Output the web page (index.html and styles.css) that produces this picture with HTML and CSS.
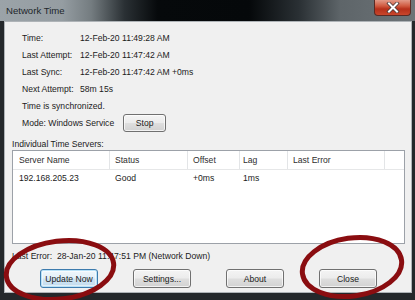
FILE: index.html
```html
<!DOCTYPE html>
<html>
<head>
<meta charset="utf-8">
<link rel="stylesheet" href="styles.css">
</head>
<body>
<div class="window">
  <div class="titlebar">
    <span class="title">Network Time</span>
    <div class="closebtn">
      <svg width="14" height="11" viewBox="0 0 14 11"><path d="M3 1.5 L11 9.5 M11 1.5 L3 9.5" stroke="#4a3a3a" stroke-width="3.6" stroke-linecap="square"/><path d="M3 1.5 L11 9.5 M11 1.5 L3 9.5" stroke="#ffffff" stroke-width="2" stroke-linecap="square"/></svg>
    </div>
  </div>
  <div class="panel">
    <div class="info">
      <div class="row"><span class="lbl">Time:</span><span>12-Feb-20 11:49:28 AM</span></div>
      <div class="row"><span class="lbl">Last Attempt:</span><span>12-Feb-20 11:47:42 AM</span></div>
      <div class="row"><span class="lbl">Last Sync:</span><span>12-Feb-20 11:47:42 AM +0ms</span></div>
      <div class="row"><span class="lbl">Next Attempt:</span><span>58m 15s</span></div>
      <div class="row">Time is synchronized.</div>
      <div class="moderow"><span>Mode: Windows Service</span><button class="btn stop">Stop</button></div>
    </div>
    <div class="section">Individual Time Servers:</div>
    <div class="listview">
      <div class="lvhead">
        <div class="c c1">Server Name</div>
        <div class="c c2">Status</div>
        <div class="c c3">Offset</div>
        <div class="c c4">Lag</div>
        <div class="c c5">Last Error</div>
        <div class="c c6"></div>
      </div>
      <div class="lvrow">
        <div class="c c1">192.168.205.23</div>
        <div class="c c2">Good</div>
        <div class="c c3">+0ms</div>
        <div class="c c4">1ms</div>
        <div class="c c5"></div>
      </div>
    </div>
    <div class="lasterr">Last Error:&nbsp; 28-Jan-20 11:47:51 PM (Network Down)</div>
    <div class="buttons">
      <button class="btn focus">Update Now</button>
      <button class="btn">Settings...</button>
      <button class="btn">About</button>
      <button class="btn">Close</button>
    </div>
  </div>
  <svg class="marks" width="415" height="300" viewBox="0 0 415 300">
    <ellipse cx="60" cy="270" rx="54" ry="29" transform="rotate(-7 60 270)" fill="none" stroke="#8a0d10" stroke-width="5"/>
    <ellipse cx="352" cy="267" rx="50" ry="29" transform="rotate(-8 352 267)" fill="none" stroke="#8a0d10" stroke-width="5"/>
  </svg>
</div>
</body>
</html>
```
FILE: styles.css
```css
html, body {
  margin: 0;
  padding: 0;
  background: #23272a;
}
.window {
  position: relative;
  width: 415px;
  height: 300px;
  overflow: hidden;
  background: #24282b;
  font-family: "Liberation Sans", Arial, sans-serif;
  font-size: 8.6px;
  color: #1b1b1b;
}
.titlebar {
  height: 21px;
  display: flex;
  align-items: flex-start;
  justify-content: space-between;
  background: linear-gradient(90deg, #9ba3a8 0%, #959da2 15%, #747c80 22%, #2a3034 30%, #06090b 38%, #05080a 60%, #2a3034 72%, #5e6569 82%, #6c7377 100%);
}
.title {
  margin: 5px 0 0 6px;
  font-size: 9.6px;
  color: #22272b;
}
.closebtn {
  width: 37px;
  height: 16px;
  margin-right: 4px;
  box-sizing: border-box;
  border: 1px solid #5a2a24;
  border-top: none;
  border-radius: 0 0 4px 4px;
  background: linear-gradient(180deg, #e29a88 0%, #d05a40 40%, #b6301a 60%, #c8462c 100%);
  display: flex;
  align-items: center;
  justify-content: center;
}
.panel {
  margin: 0 3px 0 4px;
  height: 272px;
  box-sizing: border-box;
  background: #f0f0f0;
  border: 1px solid #aeb3b7;
  display: flex;
  flex-direction: column;
}
.info {
  padding: 8px 0 0 17px;
}
.row {
  height: 17px;
  line-height: 17px;
  display: flex;
}
.lbl {
  width: 58px;
}
.moderow {
  height: 18px;
  margin-top: -1px;
  display: flex;
  align-items: center;
}
.btn {
  font-family: "Liberation Sans", Arial, sans-serif;
  font-size: 8.6px;
  color: #1b1b1b;
  height: 19px;
  width: 58px;
  padding: 0;
  box-sizing: border-box;
  border: 1px solid #707070;
  border-radius: 3px;
  background: linear-gradient(180deg, #f4f4f4 0%, #ececec 48%, #dedede 52%, #d2d2d2 100%);
  box-shadow: inset 0 0 0 1px rgba(255, 255, 255, 0.7);
}
.stop {
  width: 43px;
  height: 18px;
  margin-left: 9px;
}
.focus {
  border-color: #3d7bad;
  background: linear-gradient(180deg, #f0f7fc 0%, #e3eff8 48%, #cfe4f3 52%, #c3dcee 100%);
  box-shadow: inset 0 0 0 1px #b9e2f8, inset 0 0 0 2px rgba(255, 255, 255, 0.5);
}
.section {
  margin: 6px 0 0 7px;
  height: 12px;
  line-height: 12px;
}
.listview {
  margin-left: 7px;
  width: 393px;
  height: 94px;
  box-sizing: border-box;
  border: 1px solid #9ca1a8;
  background: #ffffff;
}
.lvhead {
  display: flex;
  height: 18px;
  line-height: 18px;
  border-bottom: 1px solid #e6e7e8;
  color: #2e2e2e;
}
.lvhead .c {
  border-right: 1px solid #e3e5e7;
}
.lvhead .c6 {
  border-right: none;
  flex: 1;
}
.lvrow {
  display: flex;
  height: 16px;
  line-height: 16px;
}
.c {
  box-sizing: border-box;
  padding-left: 5px;
  white-space: nowrap;
}
.c1 { width: 97px; padding-left: 6px; }
.c2 { width: 78px; }
.c3 { width: 52px; }
.c4 { width: 48px; padding-left: 3px; }
.c5 { width: 97px; }
.lasterr {
  margin: 6px 0 0 7px;
  height: 12px;
  line-height: 12px;
}
.buttons {
  display: flex;
  gap: 35px;
  margin: 7px 0 0 35px;
}
.marks {
  position: absolute;
  left: 0;
  top: 0;
  pointer-events: none;
}
```
